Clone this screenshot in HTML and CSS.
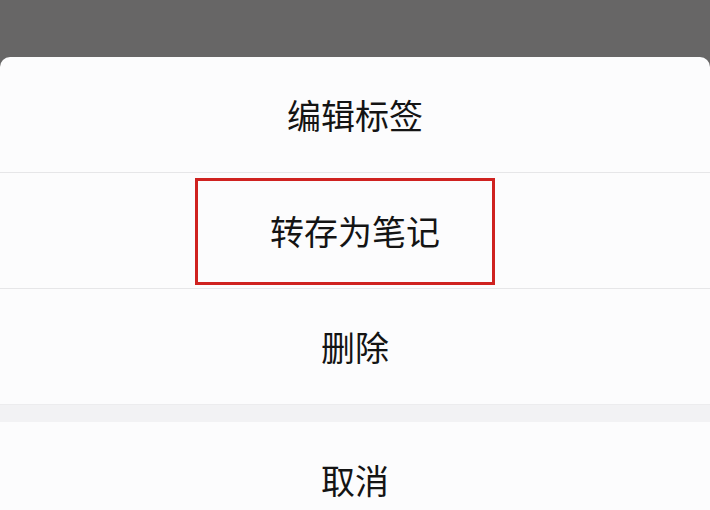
FILE: index.html
```html
<!DOCTYPE html>
<html lang="zh-CN">
<head>
    <meta charset="UTF-8"/>
    <title>操作菜单</title>
    <link rel="stylesheet" href="styles.css">
</head>
<body>
    <div class="sheet">
        <div class="sheet-group">
            <div class="sheet-item">编辑标签</div>
            <div class="sheet-item sheet-item-marked">
                转存为笔记
                <span class="mark"></span>
            </div>
            <div class="sheet-item">删除</div>
        </div>
        <div class="sheet-gap"></div>
        <div class="sheet-item">取消</div>
    </div>
</body>
</html>
```

FILE: styles.css
```css
body {
    margin: 0;
    height: 510px;
    overflow: hidden;
    background-color: #676666;
    font-family: 'Noto Sans CJK SC', 'Noto Sans', sans-serif;
}

.sheet {
    margin-top: 57px;
    height: 453px;
    overflow: hidden;
    background-color: #fcfcfd;
    border-radius: 10px 10px 0 0;
    display: flex;
    flex-direction: column;
}

.sheet-group > .sheet-item + .sheet-item {
    border-top: 1px solid #e6e6e8;
}

.sheet-item {
    height: 115px;
    flex: none;
    display: flex;
    align-items: center;
    justify-content: center;
    font-size: 34px;
    color: #141414;
}

.sheet-item-marked {
    position: relative;
}

.sheet-item-marked > .mark {
    position: absolute;
    left: 195px;
    top: 5px;
    width: 300px;
    height: 107px;
    box-sizing: border-box;
    border: 3px solid #cf2220;
}

.sheet-gap {
    height: 17px;
    flex: none;
    background-color: #f2f2f4;
    border-top: 1px solid #ececee;
}
```
